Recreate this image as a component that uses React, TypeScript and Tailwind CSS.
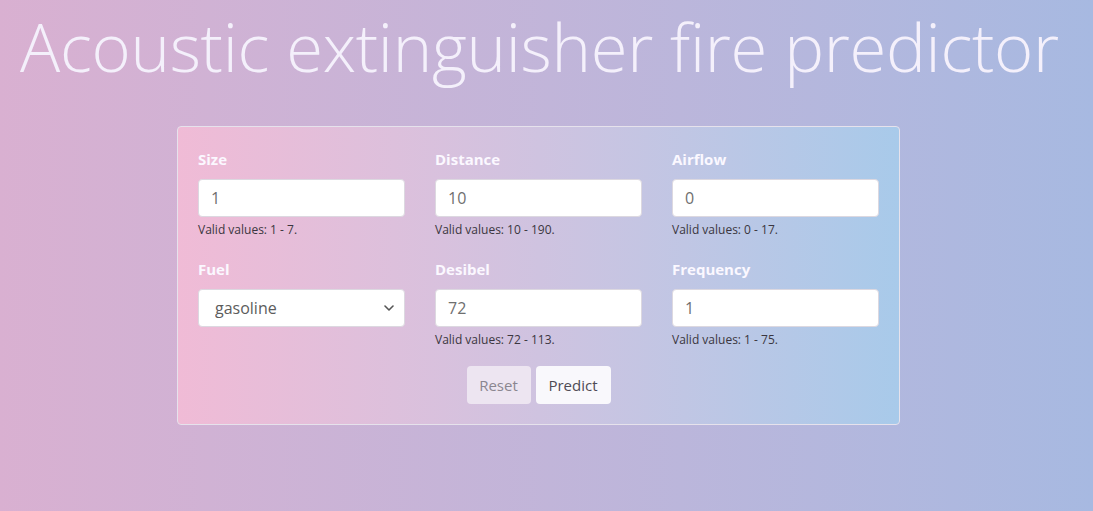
import React, { useState } from 'react';

const font = { fontFamily: '"Open Sans", "Noto Sans", sans-serif' };

type Field = { key: string; label: string; hint?: string; value: string };

const fields: Field[] = [
  { key: 'size', label: 'Size', hint: 'Valid values: 1 - 7.', value: '1' },
  { key: 'distance', label: 'Distance', hint: 'Valid values: 10 - 190.', value: '10' },
  { key: 'airflow', label: 'Airflow', hint: 'Valid values: 0 - 17.', value: '0' },
  { key: 'fuel', label: 'Fuel', value: 'gasoline' },
  { key: 'desibel', label: 'Desibel', hint: 'Valid values: 72 - 113.', value: '72' },
  { key: 'frequency', label: 'Frequency', hint: 'Valid values: 1 - 75.', value: '1' },
];

export default function App() {
  const [values, setValues] = useState<Record<string, string>>(
    Object.fromEntries(fields.map(f => [f.key, f.value]))
  );

  const reset = () => setValues(Object.fromEntries(fields.map(f => [f.key, f.value])));

  return (
    <div
      className="min-h-[511px] w-full bg-gradient-to-r from-[#d9b0d1] to-[#a7b9e1]"
      style={font}
    >
      <h1 className="pl-[20px] pt-[5px] text-[67px] leading-[82px] font-light text-[#f4f0fb] tracking-[-0.3px] whitespace-nowrap">
        Acoustic extinguisher fire predictor
      </h1>

      <div className="pt-[39px] pl-[177px]">
        <div className="w-[723px] rounded border border-[#e6e2ec] bg-gradient-to-r from-[#f0bbd6] via-[#cfc3e0] to-[#a8caea] px-5 pt-5 pb-5">
          <div className="grid grid-cols-3 gap-x-[30px] gap-y-[18px]">
            {fields.map(f => (
              <div key={f.key} className="flex flex-col">
                <label className="text-[15px] leading-6 font-bold text-[#fbf8ff] mb-2">{f.label}</label>
                {f.key === 'fuel' ? (
                  <div className="relative">
                    <select
                      value={values[f.key]}
                      onChange={e => setValues({ ...values, [f.key]: e.target.value })}
                      className="h-[38px] w-full appearance-none rounded border border-[#dcd8e0] bg-white pl-4 pr-8 text-base text-[#5c5c5c] outline-none"
                    >
                      <option value="gasoline">gasoline</option>
                      <option value="kerosene">kerosene</option>
                      <option value="thinner">thinner</option>
                      <option value="lpg">lpg</option>
                    </select>
                    <svg
                      className="pointer-events-none absolute right-[11px] top-[15px]"
                      width="10"
                      height="8"
                      viewBox="0 0 10 8"
                      fill="none"
                    >
                      <path d="M1 2l4 4 4-4" stroke="#555" strokeWidth="1.6" strokeLinecap="round" strokeLinejoin="round" />
                    </svg>
                  </div>
                ) : (
                  <input
                    type="number"
                    value={values[f.key]}
                    onChange={e => setValues({ ...values, [f.key]: e.target.value })}
                    className="h-[38px] w-full rounded border border-[#dcd8e0] bg-white px-3 text-base text-[#6f6f6f] outline-none [appearance:textfield]"
                  />
                )}
                {f.hint && (
                  <small className="mt-1 text-[12px] leading-[18px] text-[#3b3640]">{f.hint}</small>
                )}
              </div>
            ))}
          </div>

          <div className="mt-[17px] flex justify-center gap-[5px]">
            <button
              onClick={reset}
              className="h-[38px] w-[64px] rounded bg-[#ede5f1] text-[15px] text-[#8a8690]"
            >
              Reset
            </button>
            <button className="h-[38px] w-[75px] rounded bg-[#f9f8fc] text-[15px] text-[#4f4b55]">
              Predict
            </button>
          </div>
        </div>
      </div>
    </div>
  );
}
